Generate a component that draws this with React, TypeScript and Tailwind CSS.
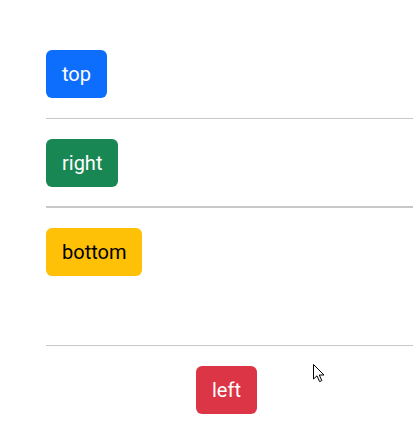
export default function App() {
  const btn =
    "inline-block px-[15px] py-2 text-[20px] leading-[30px] rounded-md border border-transparent";

  return (
    <div
      className="relative min-h-screen bg-white pl-[46px] pt-[50px]"
      style={{ fontFamily: 'Roboto, "Noto Sans", sans-serif' }}
    >
      <div>
        <button className={`${btn} bg-[#0d6efd] text-white`}>top</button>
      </div>
      <hr className="mt-5 mb-5 border-0 border-t border-[#c8c8c8]" />

      <div>
        <button className={`${btn} bg-[#198754] text-white`}>right</button>
      </div>
      <hr className="mt-[19px] mb-5 border-0 border-t-2 border-[#c8c8c8]" />

      <div>
        <button className={`${btn} bg-[#ffc107] text-black`}>bottom</button>
      </div>
      <hr className="mt-[69px] mb-5 border-0 border-t border-[#c8c8c8]" />

      <div className="pl-[150px]">
        <button className={`${btn} bg-[#dc3545] text-white`}>left</button>
      </div>

      {/* mouse pointer */}
      <svg
        className="absolute left-[313px] top-[364px]"
        width="14"
        height="20"
        viewBox="0 0 14 20"
      >
        <path
          d="M0.5 0.5 L0.5 15 L4 11.8 L6.6 17.6 L8.8 16.6 L6.3 11 L11 11 Z"
          fill="#fff"
          stroke="#000"
          strokeWidth="1"
          strokeLinejoin="miter"
        />
      </svg>
    </div>
  );
}
